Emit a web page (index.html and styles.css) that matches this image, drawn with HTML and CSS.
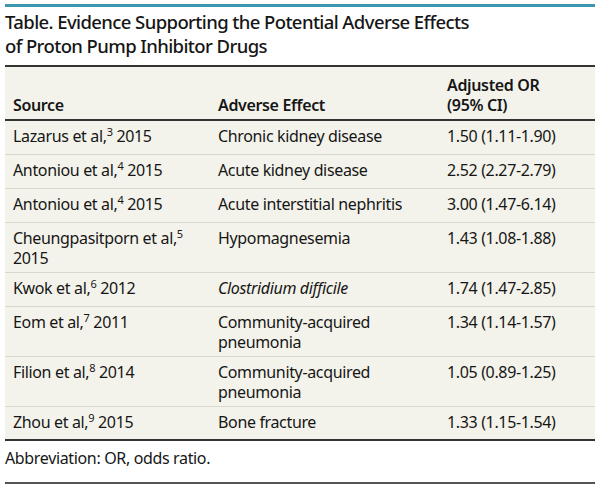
FILE: index.html
```html
<!DOCTYPE html>
<html lang="en">
<head>
<meta charset="utf-8">
<title>Table</title>
<link rel="stylesheet" href="styles.css">
</head>
<body>
<div class="figure">
  <h1 class="title">Table. Evidence Supporting the Potential Adverse Effects<br>of Proton Pump Inhibitor Drugs</h1>
  <table class="data">
    <colgroup>
      <col class="c1"><col class="c2"><col class="c3">
    </colgroup>
    <thead>
      <tr>
        <th>Source</th>
        <th>Adverse Effect</th>
        <th>Adjusted OR<br>(95% CI)</th>
      </tr>
    </thead>
    <tbody>
      <tr><td>Lazarus et al,<sup>3</sup> 2015</td><td>Chronic kidney disease</td><td>1.50 (1.11-1.90)</td></tr>
      <tr><td>Antoniou et al,<sup>4</sup> 2015</td><td>Acute kidney disease</td><td>2.52 (2.27-2.79)</td></tr>
      <tr><td>Antoniou et al,<sup>4</sup> 2015</td><td>Acute interstitial nephritis</td><td>3.00 (1.47-6.14)</td></tr>
      <tr><td>Cheungpasitporn et al,<sup>5</sup><br>2015</td><td>Hypomagnesemia</td><td>1.43 (1.08-1.88)</td></tr>
      <tr><td>Kwok et al,<sup>6</sup> 2012</td><td><i>Clostridium difficile</i></td><td>1.74 (1.47-2.85)</td></tr>
      <tr><td>Eom et al,<sup>7</sup> 2011</td><td>Community-acquired<br>pneumonia</td><td>1.34 (1.14-1.57)</td></tr>
      <tr><td>Filion et al,<sup>8</sup> 2014</td><td>Community-acquired<br>pneumonia</td><td>1.05 (0.89-1.25)</td></tr>
      <tr><td>Zhou et al,<sup>9</sup> 2015</td><td>Bone fracture</td><td>1.33 (1.15-1.54)</td></tr>
    </tbody>
  </table>
  <p class="note">Abbreviation: OR, odds ratio.</p>
</div>
</body>
</html>
```

FILE: styles.css
```css
html, body {
  margin: 0;
  padding: 0;
  background: #ffffff;
}
body {
  font-family: "Noto Sans", "Open Sans", sans-serif;
  color: #161616;
}
.figure {
  width: 590px;
  margin-left: 5px;
  padding-top: 4px;
}
.title {
  margin: 0 0 7px 0;
  border-top: 3px solid #3d97b0;
  padding-top: 3px;
  font-size: 18.5px;
  line-height: 24px;
  font-weight: 500;
  letter-spacing: -0.6px;
  color: #161616;
}
.data {
  width: 590px;
  border-collapse: collapse;
  table-layout: fixed;
  background: #f4f3eb;
  border-top: 2px solid #333333;
  border-bottom: 2px solid #333333;
  font-size: 16px;
  letter-spacing: -0.35px;
}
.c1 { width: 205px; }
.c2 { width: 229px; }
.c3 { width: 156px; }
.data th {
  text-align: left;
  vertical-align: bottom;
  font-weight: 600;
  line-height: 20px;
  padding: 8px 8px 4px 8px;
  border-bottom: 2px solid #333333;
}
.data tbody tr {
  height: 34px;
}
.data td {
  text-align: left;
  vertical-align: top;
  line-height: 20px;
  padding: 5px 8px 4px 8px;
  border-top: 1px solid #d9d7cc;
}
.data tbody tr:first-child td {
  border-top: none;
}
.data sup {
  font-size: 11px;
  line-height: 0;
  vertical-align: 6px;
}
.note {
  margin: 0;
  padding: 8px 0 14px 0;
  font-size: 16px;
  line-height: 19px;
  letter-spacing: -0.35px;
  border-bottom: 2px solid #555555;
}
```
